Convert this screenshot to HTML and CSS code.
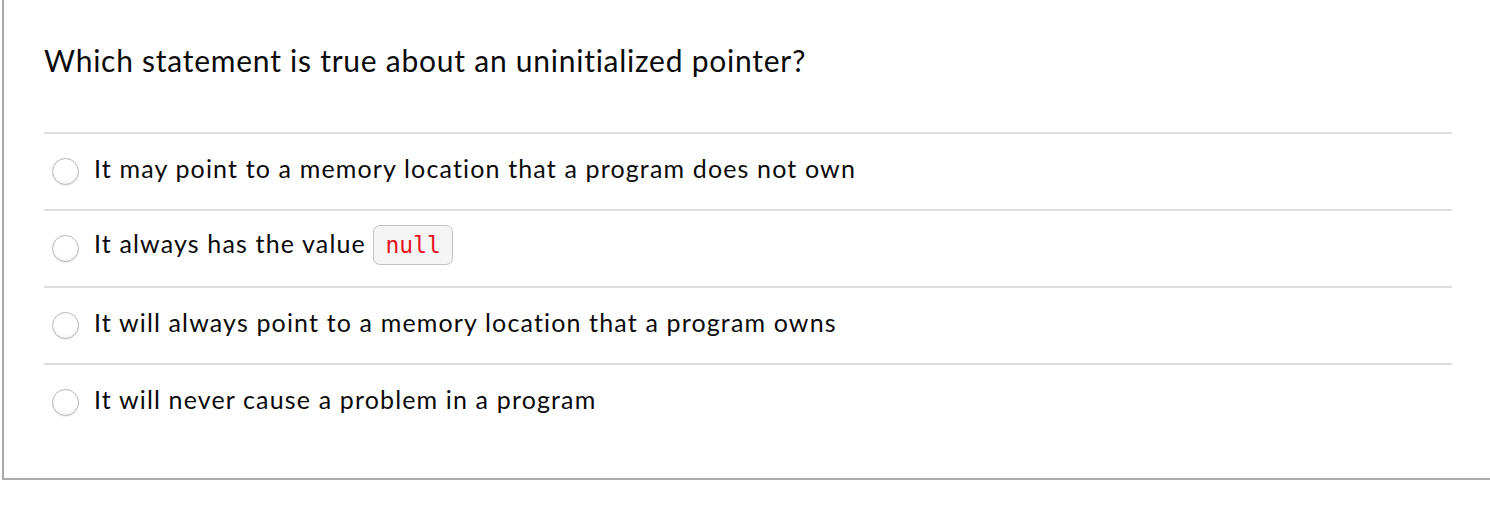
FILE: index.html
```html
<!DOCTYPE html>
<html lang="en">
<head>
    <meta charset="UTF-8">
    <meta name="viewport" content="width=device-width, initial-scale=1.0">
    <title>Question</title>
    <link rel="stylesheet" href="styles.css">
</head>
<body>
    <div class="question-card">
        <p class="question-text">Which statement is true about an uninitialized pointer?</p>

        <div class="answers">
            <label class="answer">
                <input type="radio" name="answer" class="radio">
                <span class="answer-label">It may point to a memory location that a program does not own</span>
            </label>
            <label class="answer">
                <input type="radio" name="answer" class="radio">
                <span class="answer-label">It always has the value <code>null</code></span>
            </label>
            <label class="answer">
                <input type="radio" name="answer" class="radio">
                <span class="answer-label">It will always point to a memory location that a program owns</span>
            </label>
            <label class="answer">
                <input type="radio" name="answer" class="radio">
                <span class="answer-label">It will never cause a problem in a program</span>
            </label>
        </div>
    </div>
</body>
</html>
```

FILE: styles.css
```css
body {
    margin: 0;
    font-family: Lato, "Open Sans", Arial, sans-serif;
    font-variant-ligatures: none;
    color: #0a0a0a;
    background: #fff;
}
.question-card {
    margin-left: 2px;
    border-left: 2px solid #aaa;
    border-bottom: 2px solid #aaa;
    padding: 38px 38px 38px 40px;
}
.question-text {
    margin: 0 0 50px;
    font-size: 30px;
    line-height: 44px;
    letter-spacing: 0.75px;
}
.answer {
    display: flex;
    align-items: center;
    gap: 15px;
    height: 75px;
    border-top: 2px solid #ddd;
    padding-left: 8px;
    font-size: 25px;
    letter-spacing: 1.15px;
    cursor: pointer;
}
.answer-label {
    margin-bottom: 8px;
}
.radio {
    appearance: none;
    -webkit-appearance: none;
    flex: none;
    width: 27px;
    height: 27px;
    margin: 0;
    border: 1px solid #b5b5b5;
    border-radius: 50%;
    background: radial-gradient(circle at 50% 35%, #fff 55%, #ececec 100%);
    box-shadow: 0 1px 1px rgba(0, 0, 0, 0.08);
}
code {
    display: inline-block;
    font-family: "DejaVu Sans Mono", monospace;
    font-size: 23px;
    line-height: 30px;
    letter-spacing: 0;
    color: #e8101e;
    background-color: #f5f5f5;
    border: 1px solid #bfc3c8;
    border-radius: 7px;
    padding: 4px 11px;
}
```
